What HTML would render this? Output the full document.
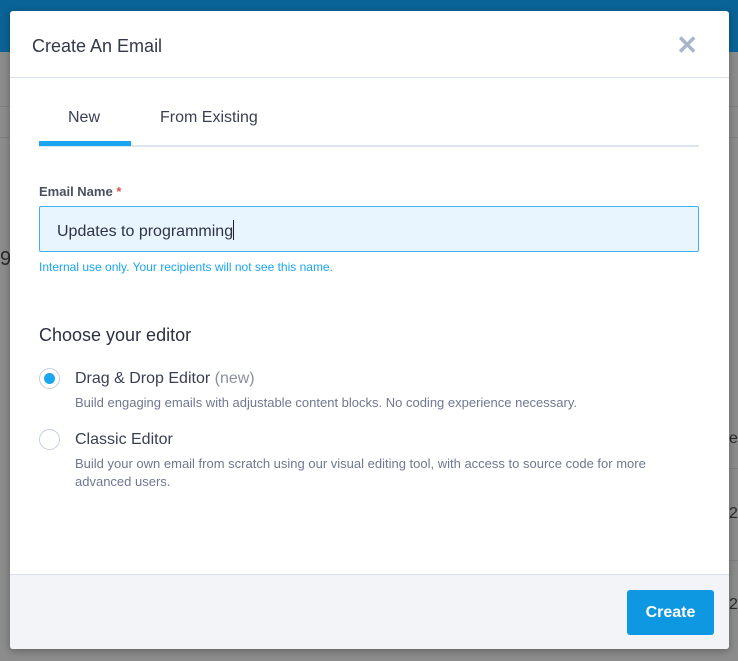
<!DOCTYPE html>
<html><head><style>
*{box-sizing:border-box;margin:0;padding:0}
body{width:738px;height:661px;overflow:hidden;background:#8c8c8c;font-family:"Liberation Sans",sans-serif;position:relative}
.top{position:absolute;left:0;top:0;width:738px;height:52px;background:#0a6396}
.bg{position:absolute;color:#2a2a2a;font-size:20px}
.line{position:absolute;height:1px;background:#7d8184}
.modal{position:absolute;left:10px;top:11px;width:719px;height:638px;background:#fff;border-radius:3px;box-shadow:0 2px 8px rgba(0,0,0,.3);overflow:hidden}
.hdr{height:67px;border-bottom:1px solid #d8e0ec;position:relative}
.hdr h1{position:absolute;left:22px;top:25px;font-size:18px;font-weight:normal;color:#33384a}
.x{position:absolute;right:31px;top:19px;font-size:26px;color:#a8b6cc;font-weight:bold}
.tabs{position:absolute;left:29px;top:95px;width:660px;height:41px;border-bottom:2px solid #dde5ef}
.tab{position:absolute;top:3px;font-size:16px;color:#3a4054}
.act{position:absolute;left:0;top:35px;width:92px;height:5px;background:#1aa5ef}
.lbl{position:absolute;left:29px;top:173px;font-size:13px;font-weight:bold;color:#4a5060}
.lbl span{color:#e05050}
.inp{position:absolute;left:29px;top:195px;width:660px;height:46px;border:1px solid #3eb2f0;background:#e8f5fe;border-radius:2px;font-size:16px;color:#2e3345;padding:13px 0 0 17px}
.cur{display:inline-block;width:1px;height:20px;background:#222;vertical-align:-4px}
.hint{position:absolute;left:29px;top:249px;font-size:12px;color:#1aa5ef}
.h2{position:absolute;left:29px;top:314px;font-size:18px;color:#2c3040}
.rad{position:absolute;left:29px;width:21px;height:21px;border-radius:50%;border:1px solid #c5cfdd;background:#fff}
.rad.on::after{content:"";position:absolute;left:4px;top:4px;width:11px;height:11px;border-radius:50%;background:#1aa5ef}
.ot{position:absolute;left:65px;font-size:16px;color:#3a4054}
.ot span{color:#8a90a0}
.od{position:absolute;left:65px;font-size:13px;color:#6f7890;line-height:18px;width:648px}
.ftr{position:absolute;left:0;top:563px;width:719px;height:75px;background:#f2f4f8;border-top:1px solid #d8e0ec}
.btn{position:absolute;right:15px;top:15px;width:87px;height:45px;background:#0f98e2;border-radius:3px;color:#fff;font-weight:bold;font-size:16px;text-align:center;line-height:45px}
</style></head><body>
<div class="top"></div>
<div class="line" style="left:0;top:106px;width:738px"></div>
<div class="line" style="left:0;top:137px;width:738px"></div>
<div class="line" style="left:729px;top:468px;width:9px"></div>
<div class="line" style="left:729px;top:560px;width:9px"></div>
<div class="bg" style="left:0;top:248px">9</div>
<div class="bg" style="left:729px;top:430px;font-size:16px">e</div>
<div class="bg" style="left:729px;top:505px;font-size:16px">2</div>
<div class="bg" style="left:729px;top:596px;font-size:16px">2</div>
<div class="modal">
<div class="hdr"><h1>Create An Email</h1><div class="x">✕</div></div>
<div class="tabs"><div class="tab" style="left:29px">New</div><div class="tab" style="left:121px">From Existing</div><div class="act"></div></div>
<div class="lbl">Email Name <span>*</span></div>
<div class="inp">Updates to programming<span class="cur"></span></div>
<div class="hint">Internal use only. Your recipients will not see this name.</div>
<div class="h2">Choose your editor</div>
<div class="rad on" style="top:357px"></div>
<div class="ot" style="top:359px">Drag &amp; Drop Editor <span>(new)</span></div>
<div class="od" style="top:383px">Build engaging emails with adjustable content blocks. No coding experience necessary.</div>
<div class="rad" style="top:418px"></div>
<div class="ot" style="top:420px">Classic Editor</div>
<div class="od" style="top:444px">Build your own email from scratch using our visual editing tool, with access to source code for more<br>advanced users.</div>
<div class="ftr"><div class="btn">Create</div></div>
</div>
</body></html>
